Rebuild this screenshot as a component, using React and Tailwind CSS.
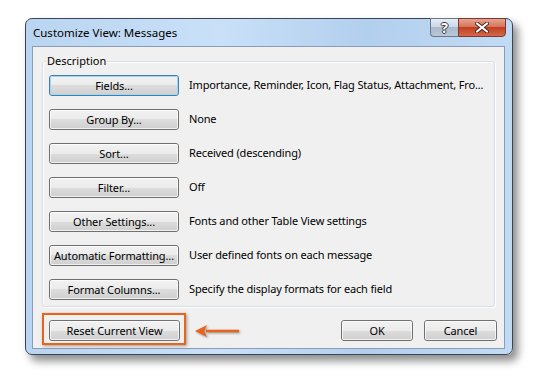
import React from 'react';

const rows = [
  { label: 'Fields...', desc: 'Importance, Reminder, Icon, Flag Status, Attachment, Fro...', focus: true },
  { label: 'Group By...', desc: 'None' },
  { label: 'Sort...', desc: 'Received (descending)' },
  { label: 'Filter...', desc: 'Off' },
  { label: 'Other Settings...', desc: 'Fonts and other Table View settings' },
  { label: 'Automatic Formatting...', desc: 'User defined fonts on each message' },
  { label: 'Format Columns...', desc: 'Specify the display formats for each field' },
];

// win7 style push button
const WinButton = ({ children, focus, className = '' }) => (
  <div
    className={`shrink-0 h-[21px] rounded-[3px] border ${focus ? 'border-[#3c7fb1]' : 'border-[#707070]'} bg-[linear-gradient(#f2f2f2_0%,#ebebeb_50%,#dddddd_50%,#cfcfcf_100%)] flex items-center justify-center text-[11px] text-black whitespace-nowrap ${className}`}
  >
    <div className={`w-full h-full rounded-[2px] border ${focus ? 'border-[#a3d7f1]' : 'border-white/70'} flex items-center justify-center leading-none tracking-[-0.1px]`}>
      {children}
    </div>
  </div>
);

export default function App() {
  return (
    <div className="w-[537px] h-[377px] bg-white relative overflow-hidden font-['Noto_Sans','Liberation_Sans',sans-serif]">
      <div className="absolute left-[25px] top-[18px] w-[488px] h-[337px] rounded-[7px] border border-[#3a4655] bg-[linear-gradient(90deg,#bad5f1,#c9e0f8_40%,#b3cfee_70%,#c2dbf5)] shadow-[5px_6px_9px_rgba(0,0,0,0.45)] flex flex-col pl-[6px] pr-[7px] pb-[5px]">
        {/* title bar */}
        <div className="h-[27px] flex items-center text-[11.5px] text-black pl-[1px] pt-[1px]">
          Customize View: Messages
        </div>
        <div className="absolute top-[-1px] right-[6px] flex h-[19px]">
          <div className="w-[28px] h-full rounded-bl-[4px] border border-[#6b7888] border-r-0 bg-[linear-gradient(#e4edf6_0%,#cbd7e4_50%,#aab9cb_50%,#b9c8d8_100%)] flex items-center justify-center">
            <span className="text-[14px] font-bold text-white leading-none [text-shadow:1px_0_0_#3a3a3a,-1px_0_0_#3a3a3a,0_1px_0_#3a3a3a,0_-1px_0_#3a3a3a]">?</span>
          </div>
          <div className="w-[48px] h-full rounded-br-[4px] border border-[#7a3a2c] bg-[linear-gradient(#e5a48f_0%,#d67158_50%,#c1401f_50%,#d5694a_100%)] flex items-center justify-center">
            <svg width="14" height="11" viewBox="0 0 14 11">
              <path d="M2 1.5 L12 9.5 M12 1.5 L2 9.5" stroke="#4a2a22" strokeWidth="4" strokeLinecap="round" />
              <path d="M2 1.5 L12 9.5 M12 1.5 L2 9.5" stroke="#ffffff" strokeWidth="2.2" strokeLinecap="round" />
            </svg>
          </div>
        </div>

        {/* client area */}
        <div className="flex-1 bg-[#f0f0f0] border border-[#8a9db4] text-[11px] text-black flex flex-col px-[9px]">
          {/* group box */}
          <div className="relative mt-[14px] h-[246px] rounded-[3px] border border-[#d5dfe5] shadow-[inset_1px_1px_0_#ffffff,1px_1px_0_#ffffff] pt-[13px] pl-[6px]">
            <span className="absolute left-[3px] top-[-9px] px-[1px] bg-[#f0f0f0] leading-[16px]">Description</span>
            <div className="flex flex-col gap-[13px]">
              {rows.map((r) => (
                <div key={r.label} className="flex items-center">
                  <WinButton focus={r.focus} className="w-[130px]">{r.label}</WinButton>
                  <span className="ml-[10px] whitespace-nowrap tracking-[-0.15px]">{r.desc}</span>
                </div>
              ))}
            </div>
          </div>

          {/* bottom buttons */}
          <div className="flex items-center mt-[13px] pl-[7px]">
            <div className="relative shrink-0">
              <WinButton className="w-[131px]">Reset Current View</WinButton>
              <div className="absolute left-[-7px] top-[-7px] w-[144px] h-[32px] border-2 border-[#e8641b] shadow-[1px_1px_3px_rgba(0,0,0,0.35)]" />
              <svg className="absolute left-[143px] top-[1px] drop-shadow-[1px_1px_1px_rgba(0,0,0,0.4)]" width="50" height="20" viewBox="0 0 50 20">
                <path d="M14 10 L47 10" stroke="#e8641b" strokeWidth="2.5" />
                <path d="M3 10 L15 4 L12 10 L15 16 Z" fill="#e8641b" />
              </svg>
            </div>
            <div className="flex-1" />
            <WinButton className="w-[72px]">OK</WinButton>
            <WinButton className="w-[73px] ml-[11px] mr-[-2px]">Cancel</WinButton>
          </div>
        </div>
      </div>
    </div>
  );
}
